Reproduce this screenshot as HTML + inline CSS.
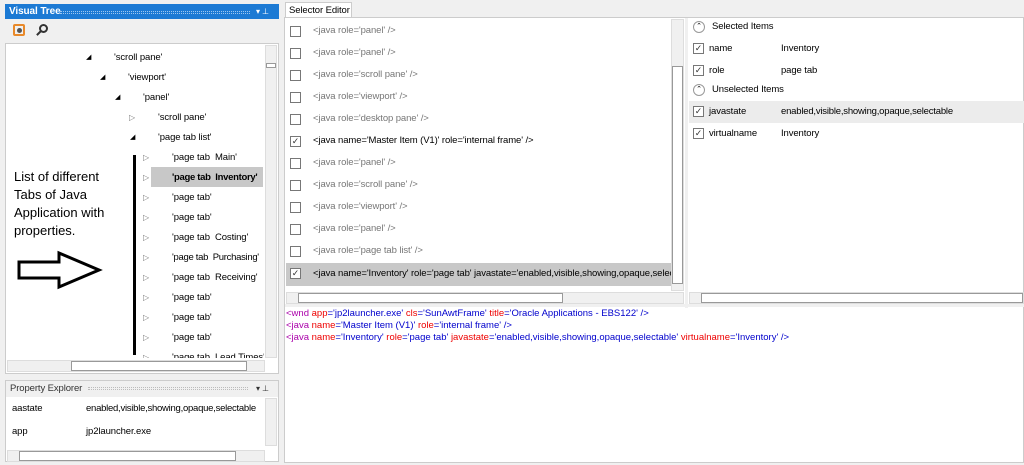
<!DOCTYPE html>
<html><head><style>
*{margin:0;padding:0;box-sizing:border-box}
body{width:1024px;height:465px;background:#f0f0f0;font-family:"Liberation Sans",sans-serif;font-size:9.5px;letter-spacing:-0.1px;color:#000;position:relative;overflow:hidden}
.a{position:absolute}
.t{position:absolute;white-space:nowrap;line-height:12px}
.cb{position:absolute;width:11px;height:11px;border:1px solid #777;background:#fff;font-size:9px;line-height:9px;text-align:center;color:#333}
.sb{position:absolute;background:#f0f0f0;border:1px solid #ddd}
.g{color:#777}
</style></head><body>
<!-- Visual Tree -->
<div class="a" style="left:5px;top:4px;width:274px;height:15px;background:#1c7ad4"></div>
<div class="t" style="left:9px;top:6px;color:#fff;font-weight:bold;font-size:10px">Visual Tree</div>
<div class="a" style="left:60px;top:11px;width:190px;height:3px;border-top:1px dotted #9cc6f0;border-bottom:1px dotted #9cc6f0"></div>
<div class="t" style="left:256px;top:6px;color:#fff;font-size:8px">▾ ⊥</div>
<div class="a" style="left:13px;top:24px;width:12px;height:12px;border:2px solid #e8892a;border-radius:2px"></div>
<div class="a" style="left:17px;top:28px;width:5px;height:5px;background:#555;border-radius:50%"></div>
<div class="a" style="left:39px;top:24px;width:9px;height:9px;border:2px solid #333;border-radius:50%"></div>
<div class="a" style="left:36px;top:32px;width:6px;height:2px;background:#333;transform:rotate(-45deg)"></div>
<div class="a" style="left:5px;top:43px;width:274px;height:331px;background:#fff;border:1px solid #ccc"></div>
<div class="sb" style="left:265px;top:45px;width:12px;height:313px"></div>
<div class="a" style="left:266px;top:63px;width:10px;height:5px;border:1px solid #999;background:#fff"></div>
<div class="sb" style="left:7px;top:360px;width:258px;height:12px"></div>
<div class="a" style="left:71px;top:361px;width:176px;height:10px;border:1px solid #999;background:#fff"></div>
<div class="a" style="left:6px;top:44px;width:258px;height:314px;overflow:hidden">
<div class="a" style="left:-6px;top:-44px;width:300px;height:400px">
<div class="t" style="left:86px;top:52px;font-size:7px">◢</div><div class="t" style="left:114px;top:52px">'scroll pane'</div>
<div class="t" style="left:100px;top:72px;font-size:7px">◢</div><div class="t" style="left:128px;top:72px">'viewport'</div>
<div class="t" style="left:115px;top:92px;font-size:7px">◢</div><div class="t" style="left:143px;top:92px">'panel'</div>
<div class="t g" style="left:129px;top:112px;font-size:8px">▷</div><div class="t" style="left:158px;top:112px">'scroll pane'</div>
<div class="t" style="left:130px;top:132px;font-size:7px">◢</div><div class="t" style="left:158px;top:132px">'page tab list'</div>
<div class="a" style="left:151px;top:167px;width:112px;height:20px;background:#c8c8c8"></div>
<div class="t g" style="left:143px;top:152px;font-size:8px">▷</div><div class="t" style="left:172px;top:152px">'page tab&nbsp; Main'</div>
<div class="t g" style="left:143px;top:172px;font-size:8px">▷</div><div class="t" style="left:172px;top:172px;font-weight:bold;letter-spacing:-0.3px">'page tab&nbsp; Inventory'</div>
<div class="t g" style="left:143px;top:192px;font-size:8px">▷</div><div class="t" style="left:172px;top:192px">'page tab'</div>
<div class="t g" style="left:143px;top:212px;font-size:8px">▷</div><div class="t" style="left:172px;top:212px">'page tab'</div>
<div class="t g" style="left:143px;top:232px;font-size:8px">▷</div><div class="t" style="left:172px;top:232px">'page tab&nbsp; Costing'</div>
<div class="t g" style="left:143px;top:252px;font-size:8px">▷</div><div class="t" style="left:172px;top:252px;letter-spacing:-0.3px">'page tab&nbsp; Purchasing'</div>
<div class="t g" style="left:143px;top:272px;font-size:8px">▷</div><div class="t" style="left:172px;top:272px">'page tab&nbsp; Receiving'</div>
<div class="t g" style="left:143px;top:292px;font-size:8px">▷</div><div class="t" style="left:172px;top:292px">'page tab'</div>
<div class="t g" style="left:143px;top:312px;font-size:8px">▷</div><div class="t" style="left:172px;top:312px">'page tab'</div>
<div class="t g" style="left:143px;top:332px;font-size:8px">▷</div><div class="t" style="left:172px;top:332px">'page tab'</div>
<div class="t g" style="left:143px;top:352px;font-size:8px">▷</div><div class="t" style="left:172px;top:352px">'page tab&nbsp; Lead Times'</div>
</div></div>
<div class="a" style="left:133px;top:155px;width:3px;height:200px;background:#000"></div>
<div class="a" style="left:14px;top:168px;font-size:13px;line-height:18px;width:110px;letter-spacing:0">List of different Tabs of Java Application with properties.</div>
<svg class="a" style="left:16px;top:250px" width="88" height="42"><path d="M3 12 H43 V3 L83 20 L43 37 V28 H3 Z" fill="none" stroke="#000" stroke-width="3"/></svg>
<!-- Property Explorer -->
<div class="a" style="left:5px;top:380px;width:274px;height:82px;background:#fff;border:1px solid #ccc"></div>
<div class="a" style="left:6px;top:381px;width:272px;height:16px;background:#f0f0f0"></div>
<div class="t" style="left:10px;top:383px;color:#333">Property Explorer</div>
<div class="a" style="left:88px;top:387px;width:160px;height:3px;border-top:1px dotted #bbb;border-bottom:1px dotted #bbb"></div>
<div class="t" style="left:256px;top:383px;font-size:8px;color:#333">▾ ⊥</div>
<div class="t" style="left:12px;top:403px">aastate</div><div class="t" style="left:86px;top:403px;letter-spacing:-0.25px">enabled,visible,showing,opaque,selectable</div>
<div class="t" style="left:12px;top:426px">app</div><div class="t" style="left:86px;top:426px">jp2launcher.exe</div>
<div class="sb" style="left:265px;top:398px;width:12px;height:48px"></div>
<div class="sb" style="left:7px;top:450px;width:258px;height:12px"></div>
<div class="a" style="left:19px;top:451px;width:217px;height:10px;border:1px solid #999;background:#fff"></div>
<!-- Selector Editor -->
<div class="a" style="left:285px;top:2px;width:67px;height:16px;background:#fff;border:1px solid #ccc;border-bottom:none"></div>
<div class="t" style="left:289px;top:5px">Selector Editor</div>
<div class="a" style="left:284px;top:17px;width:740px;height:446px;background:#fff;border:1px solid #ccc"></div>
<div class="a" style="left:685px;top:18px;width:3px;height:290px;background:#f0f0f0"></div>
<div class="a" style="left:285px;top:304px;width:739px;height:3px;background:#f0f0f0"></div>
<div class="a" style="left:286px;top:263px;width:385px;height:23px;background:#c8c8c8"></div>
<div class="cb" style="left:290px;top:26px"></div><div class="t g" style="left:313px;top:25px">&lt;java role='panel' /&gt;</div>
<div class="cb" style="left:290px;top:48px"></div><div class="t g" style="left:313px;top:47px">&lt;java role='panel' /&gt;</div>
<div class="cb" style="left:290px;top:70px"></div><div class="t g" style="left:313px;top:69px">&lt;java role='scroll pane' /&gt;</div>
<div class="cb" style="left:290px;top:92px"></div><div class="t g" style="left:313px;top:91px">&lt;java role='viewport' /&gt;</div>
<div class="cb" style="left:290px;top:114px"></div><div class="t g" style="left:313px;top:113px">&lt;java role='desktop pane' /&gt;</div>
<div class="cb" style="left:290px;top:136px">✓</div><div class="t" style="left:313px;top:135px">&lt;java name='Master Item (V1)' role='internal frame' /&gt;</div>
<div class="cb" style="left:290px;top:158px"></div><div class="t g" style="left:313px;top:157px">&lt;java role='panel' /&gt;</div>
<div class="cb" style="left:290px;top:180px"></div><div class="t g" style="left:313px;top:179px">&lt;java role='scroll pane' /&gt;</div>
<div class="cb" style="left:290px;top:202px"></div><div class="t g" style="left:313px;top:201px">&lt;java role='viewport' /&gt;</div>
<div class="cb" style="left:290px;top:224px"></div><div class="t g" style="left:313px;top:223px">&lt;java role='panel' /&gt;</div>
<div class="cb" style="left:290px;top:246px"></div><div class="t g" style="left:313px;top:245px">&lt;java role='page tab list' /&gt;</div>
<div class="cb" style="left:290px;top:268px">✓</div><div class="a" style="left:313px;top:268px;width:358px;height:13px;overflow:hidden"><div class="t" style="left:0;top:0;letter-spacing:-0.1px">&lt;java name='Inventory' role='page tab' javastate='enabled,visible,showing,opaque,selectable' /&gt;</div></div>
<div class="sb" style="left:671px;top:19px;width:13px;height:272px"></div>
<div class="a" style="left:672px;top:66px;width:11px;height:218px;border:1px solid #999;background:#fff"></div>
<div class="sb" style="left:286px;top:292px;width:398px;height:12px"></div>
<div class="a" style="left:298px;top:293px;width:265px;height:10px;border:1px solid #999;background:#fff"></div>
<!-- right pane -->
<div class="a" style="left:689px;top:101px;width:335px;height:22px;background:#ececec"></div>
<div class="a" style="left:693px;top:21px;width:12px;height:12px;border:1px solid #999;border-radius:50%;background:#fff;font-size:7px;text-align:center;line-height:10px">⌃</div>
<div class="t" style="left:712px;top:21px">Selected Items</div>
<div class="cb" style="left:693px;top:43px">✓</div><div class="t" style="left:709px;top:43px">name</div><div class="t" style="left:781px;top:43px">Inventory</div>
<div class="cb" style="left:693px;top:65px">✓</div><div class="t" style="left:709px;top:65px">role</div><div class="t" style="left:781px;top:65px">page tab</div>
<div class="a" style="left:693px;top:84px;width:12px;height:12px;border:1px solid #999;border-radius:50%;background:#fff;font-size:7px;text-align:center;line-height:10px">⌃</div>
<div class="t" style="left:712px;top:84px">Unselected Items</div>
<div class="cb" style="left:693px;top:106px">✓</div><div class="t" style="left:709px;top:106px">javastate</div><div class="t" style="left:781px;top:106px;letter-spacing:-0.2px">enabled,visible,showing,opaque,selectable</div>
<div class="cb" style="left:693px;top:128px">✓</div><div class="t" style="left:709px;top:128px">virtualname</div><div class="t" style="left:781px;top:128px">Inventory</div>
<div class="sb" style="left:689px;top:292px;width:335px;height:12px"></div>
<div class="a" style="left:701px;top:293px;width:322px;height:10px;border:1px solid #999;background:#fff"></div>
<!-- code -->
<div style="position:absolute;left:286px;top:308px;letter-spacing:0">
<div class="t" style="left:0;top:0;color:#00c"><span style="color:#a0a">&lt;wnd</span> <span style="color:#e00">app</span>='jp2launcher.exe' <span style="color:#e00">cls</span>='SunAwtFrame' <span style="color:#e00">title</span>='Oracle Applications - EBS122' /&gt;</div>
<div class="t" style="left:0;top:12px;color:#00c"><span style="color:#a0a">&lt;java</span> <span style="color:#e00">name</span>='Master Item (V1)' <span style="color:#e00">role</span>='internal frame' /&gt;</div>
<div class="t" style="left:0;top:24px;color:#00c"><span style="color:#a0a">&lt;java</span> <span style="color:#e00">name</span>='Inventory' <span style="color:#e00">role</span>='page tab' <span style="color:#e00">javastate</span>='enabled,visible,showing,opaque,selectable' <span style="color:#e00">virtualname</span>='Inventory' /&gt;</div>
</div>
</body></html>
